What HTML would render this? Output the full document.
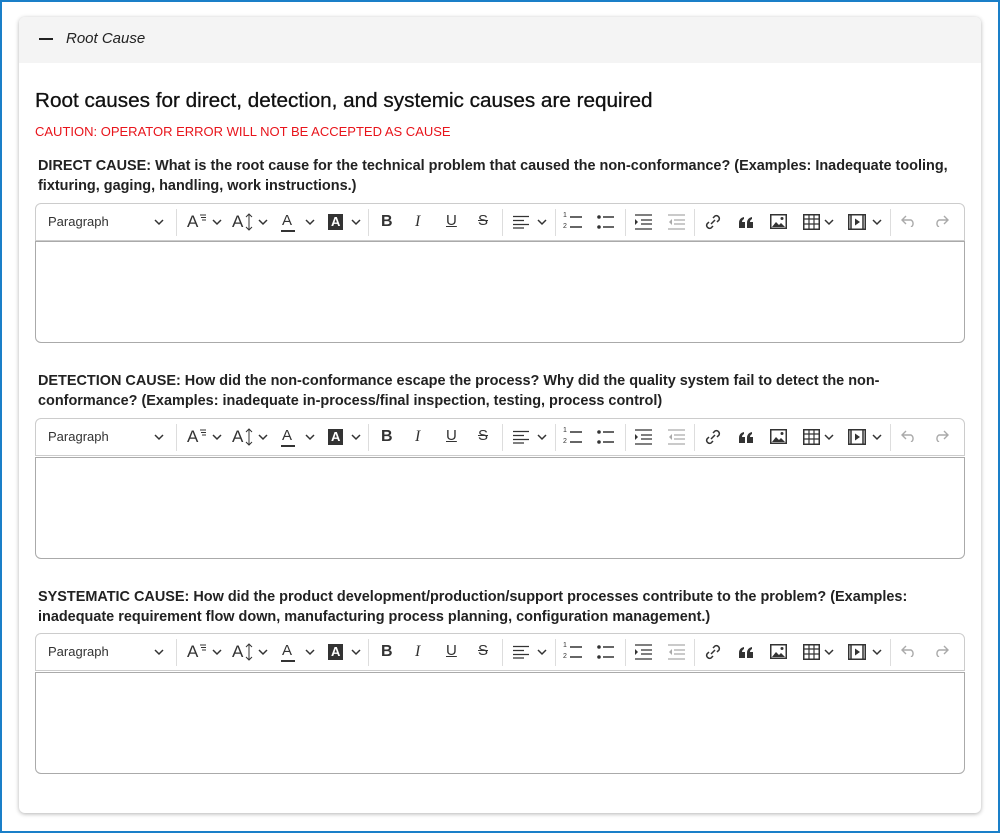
<!DOCTYPE html>
<html><head><style>
*{box-sizing:border-box;margin:0;padding:0}
body{width:1000px;height:833px;background:#fff;font-family:"Liberation Sans",sans-serif;position:relative;overflow:hidden}
.frame{position:absolute;left:0;top:0;width:1000px;height:833px;border:2px solid #1a7fc8}
.card{position:absolute;left:19px;top:17px;width:962px;height:796px;background:#fff;border-radius:6px;box-shadow:0 1px 4px rgba(0,0,0,.3)}
.hdr{position:absolute;left:0;top:0;width:962px;height:46px;background:#f4f4f4;border-radius:6px 6px 0 0}
.hdr .dash{position:absolute;left:20px;top:21px;width:14px;height:2px;background:#222}
.hdr .t{position:absolute;left:47px;top:13px;font-size:15px;font-style:italic;color:#222}
.h1{position:absolute;left:35px;top:89px;font-size:20.7px;color:#111;font-family:"Liberation Sans",sans-serif;-webkit-text-stroke:0.3px #111}
.caution{position:absolute;left:35px;top:124px;font-size:13px;color:#e8141b;font-family:"Liberation Sans",sans-serif}
.lbl{position:absolute;left:38px;font-size:14.45px;font-weight:bold;color:#222;line-height:20px;width:925px}
.tb{position:absolute;left:35px;width:930px;height:38px;border:1px solid #ccc;border-radius:6px 6px 0 0;background:#fff}
.ed{position:absolute;left:35px;width:930px;height:102px;border:1px solid #aaa;border-radius:0 0 6px 6px;background:#fff}
.tb span,.tb svg{position:absolute}
.sep{position:absolute;top:5px;width:1px;height:27px;background:#ddd}
.par{left:12px;top:10px;font-size:13px;color:#333}
</style></head><body>
<div class="frame"></div>
<div class="card">
<div class="hdr"><div class="dash"></div><div class="t">Root Cause</div></div>
</div>
<div class="h1">Root causes for direct, detection, and systemic causes are required</div>
<div class="caution">CAUTION: OPERATOR ERROR WILL NOT BE ACCEPTED AS CAUSE</div>

<div class="lbl" style="top:156px">DIRECT CAUSE: What is the root cause for the technical problem that caused the non-conformance? (Examples: Inadequate tooling, fixturing, gaging, handling, work instructions.)</div>
<div class="lbl" style="top:371px">DETECTION CAUSE: How did the non-conformance escape the process? Why did the quality system fail to detect the non-conformance? (Examples: inadequate in-process/final inspection, testing, process control)</div>
<div class="lbl" style="top:587px">SYSTEMATIC CAUSE: How did the product development/production/support processes contribute to the problem? (Examples: inadequate requirement flow down, manufacturing process planning, configuration management.)</div>

<div id="tbs"></div>
<script>
var tpl=`
<span class="par">Paragraph</span>
<svg style="left:118px;top:14px" width="10" height="8" viewBox="0 0 10 8"><path d="M1 2l4 4 4-4" stroke="#333" stroke-width="1.5" fill="none"/></svg>
<div class="sep" style="left:140px"></div>
<span style="left:151px;top:8px;font-size:17px;color:#333">A</span><svg style="left:163px;top:10px" width="8" height="8"><path d="M1 1h6M2 3.5h5M3 6h4" stroke="#333"/></svg>
<svg style="left:176px;top:14px" width="10" height="8"><path d="M1 2l4 4 4-4" stroke="#333" stroke-width="1.5" fill="none"/></svg>
<span style="left:196px;top:8px;font-size:17px;color:#333">A</span><svg style="left:209px;top:9px" width="8" height="18"><path d="M4 1v16M1 4l3-3 3 3M1 14l3 3 3-3" stroke="#333" fill="none"/></svg>
<svg style="left:222px;top:14px" width="10" height="8"><path d="M1 2l4 4 4-4" stroke="#333" stroke-width="1.5" fill="none"/></svg>
<span style="left:246px;top:8px;font-size:15px;color:#333">A</span><div style="position:absolute;left:245px;top:26px;width:14px;height:1.5px;background:#333"></div>
<svg style="left:269px;top:14px" width="10" height="8"><path d="M1 2l4 4 4-4" stroke="#333" stroke-width="1.5" fill="none"/></svg>
<div style="position:absolute;left:292px;top:10px;width:15px;height:16px;background:#333"></div><span style="left:295px;top:10px;font-size:13px;color:#fff;font-weight:bold">A</span>
<svg style="left:315px;top:14px" width="10" height="8"><path d="M1 2l4 4 4-4" stroke="#333" stroke-width="1.5" fill="none"/></svg>
<div class="sep" style="left:332px"></div>
<span style="left:345px;top:9px;font-size:16px;font-weight:bold;color:#333">B</span>
<span style="left:379px;top:9px;font-size:16px;font-style:italic;font-family:'Liberation Serif';color:#333">I</span>
<span style="left:410px;top:8px;font-size:15px;color:#333;text-decoration:underline">U</span>
<span style="left:442px;top:8px;font-size:15px;color:#333;text-decoration:line-through">S</span>
<div class="sep" style="left:466px"></div>
<svg style="left:477px;top:11px" width="16" height="14"><path d="M0 1.5h16M0 5.5h11M0 9.5h16M0 13h11" stroke="#333" stroke-width="1.3"/></svg>
<svg style="left:501px;top:14px" width="10" height="8"><path d="M1 2l4 4 4-4" stroke="#333" stroke-width="1.5" fill="none"/></svg>
<div class="sep" style="left:519px"></div>
<span style="left:527px;top:8px;font-size:7px;color:#333">1</span><span style="left:527px;top:19px;font-size:7px;color:#333">2</span>
<svg style="left:531px;top:11px" width="16" height="14"><path d="M3 2h12M3 12h12" stroke="#333" stroke-width="1.5"/></svg>
<svg style="left:561px;top:11px" width="17" height="14"><circle cx="2" cy="2" r="1.8" fill="#333"/><circle cx="2" cy="12" r="1.8" fill="#333"/><path d="M6 2h11M6 12h11" stroke="#333" stroke-width="1.5"/></svg>
<div class="sep" style="left:589px"></div>
<svg style="left:599px;top:10px" width="17" height="16"><path d="M0 1h17M6 6h11M6 10h11M0 15h17" stroke="#333" stroke-width="1.3"/><path d="M0 5l3 3-3 3z" fill="#333"/></svg>
<svg style="left:632px;top:10px" width="17" height="16"><path d="M0 1h17M6 6h11M6 10h11M0 15h17" stroke="#aaa" stroke-width="1.3"/><path d="M4 5l-3 3 3 3z" fill="#aaa"/></svg>
<div class="sep" style="left:658px"></div>
<svg style="left:668px;top:9px" width="18" height="18"><path d="M7 11l4-4M9 5l2-2a3 3 0 014 4l-2 2M9 13l-2 2a3 3 0 01-4-4l2-2" stroke="#333" stroke-width="1.5" fill="none"/></svg>
<svg style="left:702px;top:12px" width="16" height="12"><path d="M1 12V7Q1 2 6 1v2Q4 4 4 6h3v6zM9 12V7Q9 2 14 1v2Q12 4 12 6h3v6z" fill="#333"/></svg>
<svg style="left:734px;top:10px" width="17" height="15"><rect x="0.75" y="0.75" width="15.5" height="13.5" fill="none" stroke="#333" stroke-width="1.5"/><path d="M2 13l4-5 3 3 2-2 4 4z" fill="#333"/><circle cx="12" cy="4.5" r="1.5" fill="#333"/></svg>
<svg style="left:767px;top:10px" width="17" height="16"><rect x="0.75" y="0.75" width="15.5" height="14.5" fill="none" stroke="#333" stroke-width="1.5"/><path d="M1 5h15M1 10h15M6 1v14M11 1v14" stroke="#333" stroke-width="1.2"/></svg>
<svg style="left:788px;top:14px" width="10" height="8"><path d="M1 2l4 4 4-4" stroke="#333" stroke-width="1.5" fill="none"/></svg>
<svg style="left:812px;top:10px" width="18" height="16"><rect x="0.75" y="0.75" width="16.5" height="14.5" fill="none" stroke="#333" stroke-width="1.5"/><path d="M3 1v14M15 1v14" stroke="#333" stroke-width="1.5"/><path d="M7 4.5l5 3.5-5 3.5z" fill="#333"/></svg>
<svg style="left:836px;top:14px" width="10" height="8"><path d="M1 2l4 4 4-4" stroke="#333" stroke-width="1.5" fill="none"/></svg>
<div class="sep" style="left:854px"></div>
<svg style="left:865px;top:11px" width="16" height="12"><path d="M5 1L1 5l4 4M1 5h9a4 4 0 010 7" stroke="#aaa" stroke-width="1.4" fill="none"/></svg>
<svg style="left:897px;top:11px" width="16" height="12"><path d="M11 1l4 4-4 4M15 5H6a4 4 0 000 7" stroke="#aaa" stroke-width="1.4" fill="none"/></svg>
`;
var h='';[[203,241],[418,457],[633,672]].forEach(function(p){h+='<div class="tb" style="top:'+p[0]+'px">'+tpl+'</div><div class="ed" style="top:'+p[1]+'px"></div>';});
document.getElementById('tbs').innerHTML=h;
</script>
</body></html>
